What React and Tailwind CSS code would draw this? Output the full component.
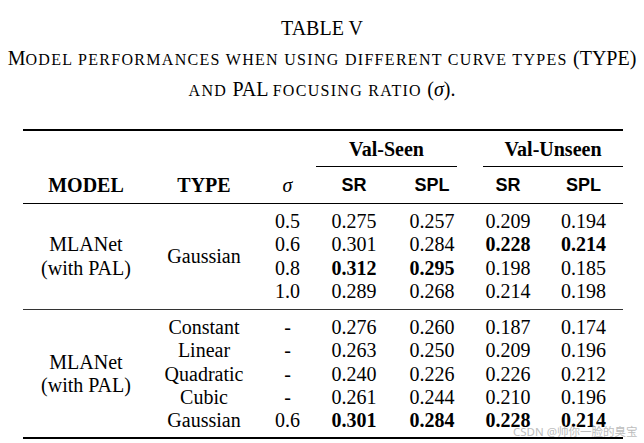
const serif = { fontFamily: '"Liberation Serif", "Times New Roman", serif' };

const cols = 'grid grid-cols-[126px_110px_57px_76px_80px_72px_79px]';

const group1 = [
  ['0.5', '0.275', '0.257', '0.209', '0.194'],
  ['0.6', '0.301', '0.284', '*0.228', '*0.214'],
  ['0.8', '*0.312', '*0.295', '0.198', '0.185'],
  ['1.0', '0.289', '0.268', '0.214', '0.198'],
];

const group2 = [
  ['Constant', '-', '0.276', '0.260', '0.187', '0.174'],
  ['Linear', '-', '0.263', '0.250', '0.209', '0.196'],
  ['Quadratic', '-', '0.240', '0.226', '0.226', '0.212'],
  ['Cubic', '-', '0.261', '0.244', '0.210', '0.196'],
  ['Gaussian', '0.6', '*0.301', '*0.284', '*0.228', '*0.214'],
];

// a leading * marks a bold (best) value
function Cell({ v }) {
  const bold = v.startsWith('*');
  return (
    <div className={`text-center ${bold ? 'font-bold' : ''}`}>{bold ? v.slice(1) : v}</div>
  );
}

function ModelCell({ span }) {
  return (
    <div className={`col-start-1 row-start-1 ${span} flex flex-col items-center justify-center`}>
      <span>MLANet</span>
      <span>(with PAL)</span>
    </div>
  );
}

function Sc({ children }) {
  return <span className="text-[16px] tracking-[1.3px]">{children}</span>;
}

export default function App() {
  return (
    <div className="relative w-[644px] h-[443px] bg-white text-black overflow-hidden" style={serif}>
      {/* caption */}
      <div className="pt-[13px] text-center text-[20px] leading-[30px] whitespace-nowrap">
        <div>TABLE V</div>
        <div>
          M<Sc>ODEL PERFORMANCES WHEN USING DIFFERENT CURVE TYPES </Sc>(TYPE)
        </div>
        <div className="-mt-[1px]">
          <Sc>AND </Sc>PAL <Sc>FOCUSING RATIO </Sc>(<i>σ</i>).
        </div>
      </div>

      <div className="w-[600px] ml-[23px] mt-[23px] text-[20px]">
        {/* header */}
        <div className={`${cols} grid-rows-[36px_36px] border-t-2 border-b border-black`}>
          <div className="col-start-1 row-start-2 flex items-center justify-center font-bold">MODEL</div>
          <div className="col-start-2 row-start-2 flex items-center justify-center font-bold">TYPE</div>
          <div className="col-start-3 row-start-2 flex items-center justify-center italic">σ</div>
          <div className="col-start-4 col-span-2 row-start-1 mr-[15px] flex items-center justify-center border-b border-black font-bold">
            Val-Seen
          </div>
          <div className="col-start-6 col-span-2 row-start-1 ml-[11px] flex items-center justify-center border-b border-black font-bold">
            Val-Unseen
          </div>
          {['SR', 'SPL', 'SR', 'SPL'].map((h, i) => (
            <div
              key={i}
              className="row-start-2 flex items-center justify-center font-bold text-[18px]"
              style={{ fontFamily: '"Liberation Sans", Arial, sans-serif', gridColumnStart: i + 4 }}
            >
              {h}
            </div>
          ))}
        </div>

        {/* group 1: Gaussian with varying sigma */}
        <div className={`${cols} auto-rows-[23.3px] leading-[23.3px] pt-[6px] pb-[6px] border-b-[1.5px] border-[#333]`}>
          <ModelCell span="row-span-4" />
          <div className="col-start-2 row-start-1 row-span-4 flex items-center justify-center">Gaussian</div>
          {group1.map((r, ri) =>
            r.map((v, ci) => (
              <div key={`${ri}-${ci}`} style={{ gridRowStart: ri + 1, gridColumnStart: ci + 3 }}>
                <Cell v={v} />
              </div>
            ))
          )}
        </div>

        {/* group 2: curve types */}
        <div className={`${cols} auto-rows-[23.3px] leading-[23.3px] pt-[6px] pb-[4px] border-b-2 border-black`}>
          <ModelCell span="row-span-5" />
          {group2.map((r, ri) =>
            r.map((v, ci) => (
              <div key={`${ri}-${ci}`} style={{ gridRowStart: ri + 1, gridColumnStart: ci + 2 }}>
                <Cell v={v} />
              </div>
            ))
          )}
        </div>
      </div>

      {/* watermark */}
      <div
        className="absolute left-[513px] top-[424px] text-[11.5px] leading-[16px] text-[#bdbdbd] whitespace-nowrap"
        style={{ fontFamily: '"Noto Sans", "Noto Sans CJK SC", sans-serif' }}
      >
        CSDN @帅你一脸的臭宝
      </div>
    </div>
  );
}
